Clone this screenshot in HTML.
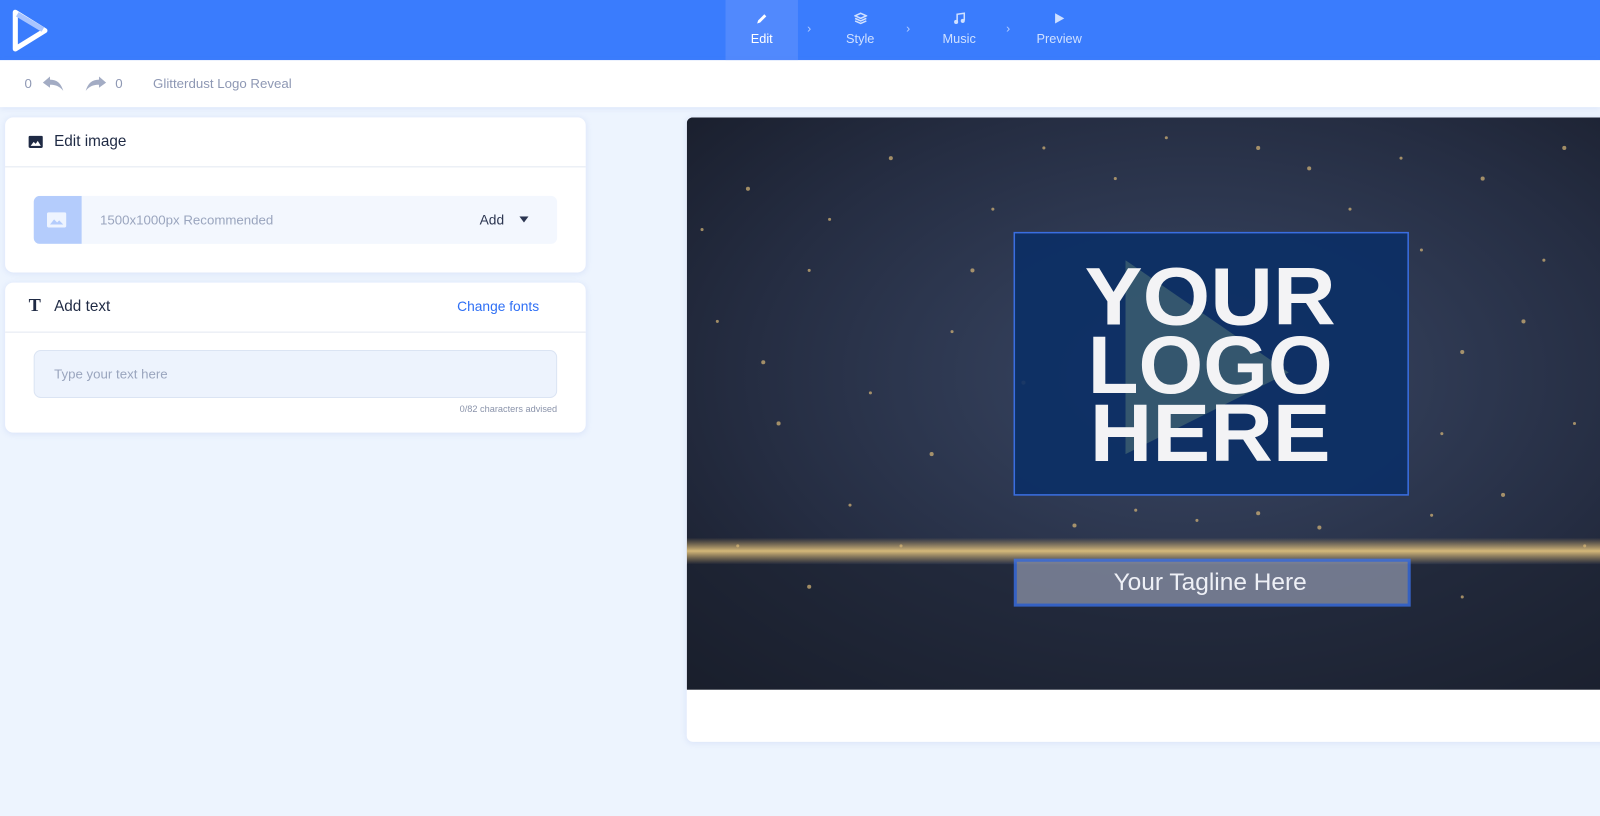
<!DOCTYPE html>
<html><head><meta charset="utf-8"><style>
*{box-sizing:border-box;margin:0;padding:0}
body{width:1600px;height:816px;background:#edf4fe;font-family:"Liberation Sans",sans-serif;position:relative;overflow:hidden}
#w{position:absolute;left:0;top:0;width:1568px;height:800px;transform:scale(1.020408);transform-origin:0 0}
.hdr{position:absolute;left:0;top:0;width:1568px;height:59px;background:#3a7cfd}
.tab{position:absolute;top:0;height:59px;text-align:center;color:#cfe0ff;font-size:12.5px}
.tab .ic{position:absolute;top:12px;left:0;right:0;text-align:center}
.tab .lb{position:absolute;top:31px;left:0;right:0}
.chev{position:absolute;top:21px;color:#b9d0ff;font-size:12px}
.bar{position:absolute;left:0;top:59px;width:1568px;height:46px;background:#fff;box-shadow:0 2px 6px rgba(120,150,220,.15);color:#8e98b4;font-size:13px}
.card{position:absolute;background:#fff;border-radius:8px;box-shadow:0 1px 6px rgba(120,150,220,.18)}
.ch{height:49px;border-bottom:1px solid #e3e8f2;position:relative;font-size:15px;color:#1f2a44}
</style></head><body><div id="w">
<div class="hdr">
<svg style="position:absolute;left:12px;top:9px" width="36" height="42" viewBox="0 0 36 42"><path d="M3 3 L3 39 L32 21 Z" fill="none" stroke="#fff" stroke-width="5" stroke-linejoin="round"/><path d="M5 5 L30 20" stroke="#a9c5ff" stroke-width="5"/></svg>
<div style="position:absolute;left:711px;top:0;width:71px;height:59px;background:#5189fd"></div>
<div class="tab" style="left:711px;width:71px;color:#fff"><div class="ic"><svg width="12" height="12" viewBox="0 0 12 12"><path d="M1 11 L2 8 L8 2 L10 4 L4 10 Z" fill="#fff"/></svg></div><div class="lb">Edit</div></div>
<div class="chev" style="left:791px">›</div>
<div class="tab" style="left:808px;width:70px"><div class="ic"><svg width="13" height="12" viewBox="0 0 13 12"><path d="M6.5 1 L12 3.5 L6.5 6 L1 3.5Z M1 6 L6.5 8.5 L12 6 M1 8.5 L6.5 11 L12 8.5" fill="none" stroke="#cfe0ff" stroke-width="1.5"/></svg></div><div class="lb">Style</div></div>
<div class="chev" style="left:888px">›</div>
<div class="tab" style="left:905px;width:70px"><div class="ic"><svg width="12" height="12" viewBox="0 0 12 12"><path d="M4 9 V2 L11 1 V8" fill="none" stroke="#cfe0ff" stroke-width="1.5"/><circle cx="3" cy="9.5" r="2" fill="#cfe0ff"/><circle cx="9.5" cy="8.5" r="2" fill="#cfe0ff"/></svg></div><div class="lb">Music</div></div>
<div class="chev" style="left:986px">›</div>
<div class="tab" style="left:1002px;width:72px"><div class="ic"><svg width="12" height="12" viewBox="0 0 12 12"><path d="M2 1 L11 6 L2 11Z" fill="#cfe0ff"/></svg></div><div class="lb">Preview</div></div>
</div>
<div class="bar">
<span style="position:absolute;left:24px;top:15px">0</span>
<svg style="position:absolute;left:41px;top:15px" width="22" height="16" viewBox="0 0 22 16"><path d="M1 7 L8 1 V4 C15 4 19 8 21 15 C17 10 13 9 8 9 V12Z" fill="#a3acc4"/></svg>
<svg style="position:absolute;left:83px;top:15px" width="22" height="16" viewBox="0 0 22 16"><path d="M21 7 L14 1 V4 C7 4 3 8 1 15 C5 10 9 9 14 9 V12Z" fill="#a3acc4"/></svg>
<span style="position:absolute;left:113px;top:15px">0</span>
<span style="position:absolute;left:150px;top:15px">Glitterdust Logo Reveal</span>
</div>
<div class="card" style="left:5px;top:115px;width:569px;height:152px">
<div class="ch"><svg style="position:absolute;left:23px;top:18px" width="14" height="12" viewBox="0 0 14 12"><rect width="14" height="12" rx="1.5" fill="#1f2a44"/><path d="M2 10 L5 6 L7 8 L9 5 L12 10Z" fill="#fff"/></svg><span style="position:absolute;left:48px;top:15px">Edit image</span></div>
<div style="position:absolute;left:28px;top:77px;width:513px;height:47px;background:#f3f7fe;border-radius:6px;overflow:hidden">
<div style="position:absolute;left:0;top:0;width:47px;height:47px;background:#b4ccfc"><svg style="position:absolute;left:13px;top:16px" width="19" height="15" viewBox="0 0 19 15"><rect width="19" height="15" rx="2" fill="#eef4ff"/><path d="M3 12 L7 7 L10 10 L12 8 L16 12Z" fill="#b4ccfc"/></svg></div>
<span style="position:absolute;left:65px;top:16px;font-size:13px;color:#9aa5be">1500x1000px Recommended</span>
<span style="position:absolute;left:437px;top:16px;font-size:13.5px;color:#2b3550">Add</span>
<svg style="position:absolute;left:476px;top:20px" width="9" height="6" viewBox="0 0 9 6"><path d="M0 0 H9 L4.5 6Z" fill="#2b3550"/></svg>
</div></div>
<div class="card" style="left:5px;top:277px;width:569px;height:147px">
<div class="ch"><span style="position:absolute;left:23px;top:12px;font-family:'Liberation Serif',serif;font-weight:bold;font-size:18px">T</span><span style="position:absolute;left:48px;top:15px">Add text</span><span style="position:absolute;left:443px;top:16px;font-size:13.5px;color:#2e6ff5">Change fonts</span></div>
<div style="position:absolute;left:28px;top:66px;width:513px;height:47px;background:#edf3fd;border:1px solid #dbe4f3;border-radius:7px"><span style="position:absolute;left:19px;top:15px;font-size:13px;color:#9aa5be">Type your text here</span></div>
<span style="position:absolute;right:28px;top:119px;font-size:9px;color:#8a93aa">0/82 characters advised</span>
</div>
<div class="card" style="left:673px;top:115px;width:905px;height:612px;border-radius:6px 0 0 6px;overflow:hidden">
<svg width="905" height="561" viewBox="0 0 905 561" style="display:block">
<defs><radialGradient id="bg" cx="0.55" cy="0.45" r="0.8"><stop offset="0" stop-color="#3a4866"/><stop offset="0.6" stop-color="#252d42"/><stop offset="1" stop-color="#161a26"/></radialGradient>
<linearGradient id="gl" x1="0" y1="0" x2="0" y2="1"><stop offset="0" stop-color="#d8b068" stop-opacity="0"/><stop offset="0.5" stop-color="#e8c880" stop-opacity="0.9"/><stop offset="1" stop-color="#d8b068" stop-opacity="0"/></linearGradient></defs>
<rect width="905" height="561" fill="url(#bg)"/>
<rect x="0" y="412" width="905" height="26" fill="url(#gl)"/>
<rect x="0" y="438" width="905" height="123" fill="#1c2130" opacity="0.5"/>
<g fill="#d9b878" opacity="0.7">
<circle cx="60" cy="70" r="2"/><circle cx="120" cy="150" r="1.5"/><circle cx="200" cy="40" r="2"/><circle cx="260" cy="210" r="1.5"/><circle cx="90" cy="300" r="2"/><circle cx="160" cy="380" r="1.5"/><circle cx="240" cy="330" r="2"/><circle cx="300" cy="90" r="1.5"/><circle cx="30" cy="200" r="1.5"/><circle cx="780" cy="60" r="2"/><circle cx="840" cy="140" r="1.5"/><circle cx="760" cy="230" r="2"/><circle cx="870" cy="300" r="1.5"/><circle cx="800" cy="370" r="2"/><circle cx="730" cy="390" r="1.5"/><circle cx="860" cy="30" r="2"/><circle cx="420" cy="60" r="1.5"/><circle cx="560" cy="30" r="2"/><circle cx="650" cy="90" r="1.5"/><circle cx="380" cy="400" r="2"/><circle cx="500" cy="395" r="1.5"/><circle cx="620" cy="402" r="2"/><circle cx="700" cy="40" r="1.5"/><circle cx="330" cy="260" r="2"/><circle cx="50" cy="420" r="1.5"/><circle cx="120" cy="460" r="2"/><circle cx="760" cy="470" r="1.5"/>
<circle cx="15" cy="110" r="1.5"/><circle cx="75" cy="240" r="2"/><circle cx="180" cy="270" r="1.5"/><circle cx="140" cy="100" r="1.5"/><circle cx="280" cy="150" r="2"/><circle cx="210" cy="420" r="1.5"/><circle cx="720" cy="130" r="1.5"/><circle cx="820" cy="200" r="2"/><circle cx="740" cy="310" r="1.5"/><circle cx="880" cy="420" r="1.5"/><circle cx="470" cy="20" r="1.5"/><circle cx="610" cy="50" r="2"/><circle cx="350" cy="30" r="1.5"/><circle cx="440" cy="385" r="1.5"/><circle cx="560" cy="388" r="2"/>
</g>
<rect x="321" y="113" width="386" height="257" fill="#0b2f66" opacity="0.9" stroke="#3c74f0" stroke-width="1.5"/>
<path d="M430 140 L430 330 L590 250Z" fill="#4d6f74" opacity="0.6"/>
<g font-family="Liberation Sans,sans-serif" font-weight="bold" fill="#f3f3f5" text-anchor="middle" font-size="80"><text x="513" y="203" textLength="246" lengthAdjust="spacingAndGlyphs">YOUR</text><text x="513" y="270" textLength="240" lengthAdjust="spacingAndGlyphs">LOGO</text><text x="513" y="337" textLength="236" lengthAdjust="spacingAndGlyphs">HERE</text></g>
<rect x="322" y="434" width="386" height="44" fill="#8c93a8" opacity="0.75" stroke="#3c74f0" stroke-width="3"/>
<text x="513" y="463" font-family="Liberation Sans,sans-serif" font-size="24" fill="#eef0f6" text-anchor="middle">Your Tagline Here</text>
</svg>
</div>
</div></body></html>
